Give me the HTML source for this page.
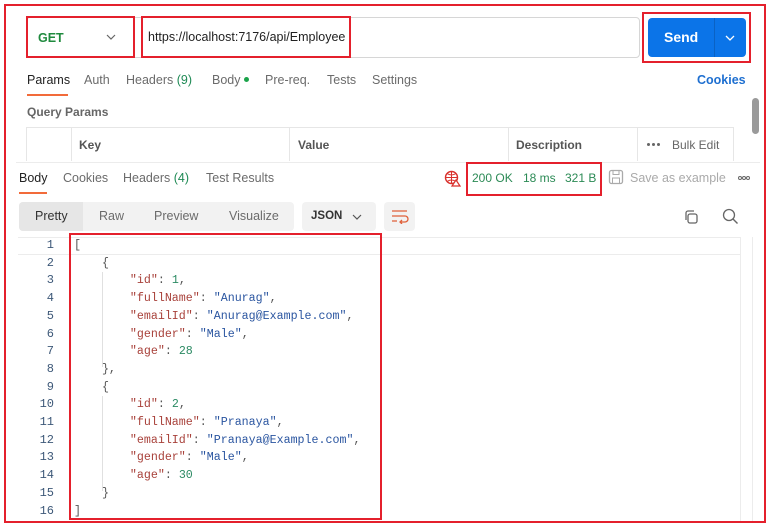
<!DOCTYPE html>
<html><head><meta charset="utf-8"><style>
*{margin:0;padding:0;box-sizing:border-box}
body{width:768px;height:526px;background:#fff;position:relative;overflow:hidden;font-family:"Liberation Sans",sans-serif;font-size:12.5px;color:#6b6b6b}
.a{position:absolute;white-space:nowrap}
.red{position:absolute;border:2px solid #e4202c}
.code{font-family:"Liberation Mono",monospace;font-size:11.65px;line-height:17.7px}
.k{color:#a8413a}.s{color:#2a55a0}.n{color:#2b8a63}.p{color:#555}
.ln{position:absolute;left:20px;width:34px;text-align:right;font-family:"Liberation Mono",monospace;font-size:12px;line-height:17.7px;color:#3d5878}
</style></head><body>
<div class="a" style="left:26px;top:17px;width:614px;height:41px;border:1px solid #d6d6d6;border-radius:4px"></div>
<div class="a" style="left:134px;top:17px;width:1px;height:41px;background:#d6d6d6"></div>
<div class="a" style="left:38px;top:31px;font-weight:bold;color:#1f8a3e;font-size:12.5px">GET</div>
<svg class="a" style="left:106px;top:33px" width="10" height="8"><path d="M1 2 L5 6 L9 2" stroke="#666" fill="none" stroke-width="1.2"/></svg>
<div class="a" style="left:148px;top:30px;color:#222;font-size:12.5px">https://localhost:7176/api/Employee</div>
<div class="a" style="left:648px;top:18px;width:98px;height:39px;background:#0b74e8;border-radius:4px"></div>
<div class="a" style="left:714px;top:18px;width:1px;height:39px;background:#0a62c4"></div>
<div class="a" style="left:664px;top:29px;color:#fff;font-weight:bold;font-size:14px">Send</div>
<svg class="a" style="left:725px;top:34px" width="10" height="8"><path d="M1 2 L5 6 L9 2" stroke="#fff" fill="none" stroke-width="1.3"/></svg>
<div class="a" style="left:27px;top:73px;color:#222">Params</div>
<div class="a" style="left:27px;top:94px;width:41px;height:2px;background:#f26b3a"></div>
<div class="a" style="left:84px;top:73px">Auth</div>
<div class="a" style="left:126px;top:73px">Headers <span style="color:#1f8a55">(9)</span></div>
<div class="a" style="left:212px;top:73px">Body <span style="display:inline-block;width:5px;height:5px;border-radius:50%;background:#1aa34a;vertical-align:2px"></span></div>
<div class="a" style="left:265px;top:73px">Pre-req.</div>
<div class="a" style="left:327px;top:73px">Tests</div>
<div class="a" style="left:372px;top:73px">Settings</div>
<div class="a" style="left:697px;top:73px;color:#1e6fd0;font-weight:bold">Cookies</div>
<div class="a" style="left:27px;top:105px;font-weight:bold;color:#666;font-size:12px">Query Params</div>
<div class="a" style="left:752px;top:98px;width:7px;height:36px;background:#9a9a9a;border-radius:4px"></div>
<div class="a" style="left:26px;top:127px;width:708px;height:34px;border:1px solid #e6e6e6;border-bottom:none"></div>
<div class="a" style="left:71px;top:127px;width:1px;height:34px;background:#e6e6e6"></div>
<div class="a" style="left:289px;top:127px;width:1px;height:34px;background:#e6e6e6"></div>
<div class="a" style="left:508px;top:127px;width:1px;height:34px;background:#e6e6e6"></div>
<div class="a" style="left:637px;top:127px;width:1px;height:34px;background:#e6e6e6"></div>
<div class="a" style="left:79px;top:138px;font-weight:bold;color:#555;font-size:12px">Key</div>
<div class="a" style="left:298px;top:138px;font-weight:bold;color:#555;font-size:12px">Value</div>
<div class="a" style="left:516px;top:138px;font-weight:bold;color:#555;font-size:12px">Description</div>
<div class="a" style="left:647px;top:143px;width:3px;height:3px;background:#666;border-radius:50%;box-shadow:5px 0 #666,10px 0 #666"></div>
<div class="a" style="left:672px;top:138px;color:#666;font-size:12px">Bulk Edit</div>
<div class="a" style="left:16px;top:162px;width:744px;height:1px;background:#ececec"></div>
<div class="a" style="left:19px;top:171px;color:#222">Body</div>
<div class="a" style="left:19px;top:192px;width:28px;height:2px;background:#f26b3a"></div>
<div class="a" style="left:63px;top:171px">Cookies</div>
<div class="a" style="left:123px;top:171px">Headers <span style="color:#1f8a55">(4)</span></div>
<div class="a" style="left:206px;top:171px">Test Results</div>
<svg class="a" style="left:444px;top:170px" width="17" height="17"><circle cx="7.5" cy="7.5" r="6" fill="none" stroke="#d9302c" stroke-width="1.4"/><path d="M1.5 7.5h12M7.5 1.5v12M3 3.5q4.5 3 9 0M3 11.5q4.5-3 9 0" stroke="#d9302c" fill="none" stroke-width="1"/><path d="M12 10l4 6h-8z" fill="#fff" stroke="#d9302c" stroke-width="1.2"/></svg>
<div class="a" style="left:472px;top:171px;color:#2b8a55;font-size:12px">200 OK</div>
<div class="a" style="left:523px;top:171px;color:#2b8a55;font-size:12px">18 ms</div>
<div class="a" style="left:565px;top:171px;color:#2b8a55;font-size:12px">321 B</div>
<svg class="a" style="left:608px;top:169px" width="16" height="16"><rect x="1.5" y="1.5" width="13" height="13" rx="2" fill="none" stroke="#aaa" stroke-width="1.3"/><rect x="5" y="1.5" width="6" height="4" fill="none" stroke="#aaa"/><rect x="4.5" y="9" width="7" height="5.5" fill="none" stroke="#aaa"/></svg>
<div class="a" style="left:630px;top:171px;color:#aaa;font-size:12.5px">Save as example</div>
<div class="a" style="left:738px;top:176px;width:4px;height:4px;border:1px solid #666;border-radius:50%;box-shadow:4px 0 0 -1px #fff"></div>
<div class="a" style="left:742px;top:176px;width:4px;height:4px;border:1px solid #666;border-radius:50%"></div>
<div class="a" style="left:746px;top:176px;width:4px;height:4px;border:1px solid #666;border-radius:50%"></div>
<div class="a" style="left:19px;top:202px;width:275px;height:29px;background:#f2f2f2;border-radius:4px"></div>
<div class="a" style="left:19px;top:202px;width:64px;height:29px;background:#e6e6e6;border-radius:4px 0 0 4px"></div>
<div class="a" style="left:35px;top:209px;color:#333">Pretty</div>
<div class="a" style="left:99px;top:209px">Raw</div>
<div class="a" style="left:154px;top:209px">Preview</div>
<div class="a" style="left:229px;top:209px">Visualize</div>
<div class="a" style="left:302px;top:202px;width:74px;height:29px;background:#f2f2f2;border-radius:4px"></div>
<div class="a" style="left:311px;top:210px;color:#333;font-weight:bold;font-size:11.5px">JSON</div>
<svg class="a" style="left:352px;top:213px" width="10" height="8"><path d="M1 2 L5 6 L9 2" stroke="#555" fill="none" stroke-width="1.2"/></svg>
<div class="a" style="left:384px;top:202px;width:31px;height:29px;background:#f2f2f2;border-radius:4px"></div>
<svg class="a" style="left:391px;top:209px" width="18" height="15"><path d="M1 2h15M1 7h13a3 3 0 0 1 0 6h-5M11 11l-2 2 2 2M1 12h5" stroke="#e0603a" fill="none" stroke-width="1.3"/></svg>
<svg class="a" style="left:683px;top:209px" width="16" height="16"><rect x="5" y="5" width="9" height="9" rx="2" fill="none" stroke="#666" stroke-width="1.3"/><path d="M3 11V4a2 2 0 0 1 2-2h6" stroke="#666" fill="none" stroke-width="1.3"/></svg>
<svg class="a" style="left:722px;top:208px" width="17" height="17"><circle cx="7" cy="7" r="5.5" fill="none" stroke="#666" stroke-width="1.3"/><path d="M11 11l4.5 4.5" stroke="#666" stroke-width="1.4"/></svg>
<div class="a" style="left:18px;top:237px;width:723px;height:18px;border:1px solid #ececec;border-left:none"></div>
<div class="a" style="left:740px;top:237px;width:13px;height:285px;border-left:1px solid #ececec;border-right:1px solid #ececec"></div>
<div class="a" style="left:102px;top:272px;width:1px;height:95px;background:#e0e0e0"></div>
<div class="a" style="left:102px;top:396px;width:1px;height:95px;background:#e0e0e0"></div>
<div style="position:absolute;top:237px;left:0">
<div class="ln" style="top:0">1<br>2<br>3<br>4<br>5<br>6<br>7<br>8<br>9<br>10<br>11<br>12<br>13<br>14<br>15<br>16</div>
<div class="a code p" style="left:74px;top:0">[<br>&nbsp;&nbsp;&nbsp;&nbsp;{<br>&nbsp;&nbsp;&nbsp;&nbsp;&nbsp;&nbsp;&nbsp;&nbsp;<span class="k">"id"</span>: <span class="n">1</span>,<br>&nbsp;&nbsp;&nbsp;&nbsp;&nbsp;&nbsp;&nbsp;&nbsp;<span class="k">"fullName"</span>: <span class="s">"Anurag"</span>,<br>&nbsp;&nbsp;&nbsp;&nbsp;&nbsp;&nbsp;&nbsp;&nbsp;<span class="k">"emailId"</span>: <span class="s">"Anurag@Example.com"</span>,<br>&nbsp;&nbsp;&nbsp;&nbsp;&nbsp;&nbsp;&nbsp;&nbsp;<span class="k">"gender"</span>: <span class="s">"Male"</span>,<br>&nbsp;&nbsp;&nbsp;&nbsp;&nbsp;&nbsp;&nbsp;&nbsp;<span class="k">"age"</span>: <span class="n">28</span><br>&nbsp;&nbsp;&nbsp;&nbsp;},<br>&nbsp;&nbsp;&nbsp;&nbsp;{<br>&nbsp;&nbsp;&nbsp;&nbsp;&nbsp;&nbsp;&nbsp;&nbsp;<span class="k">"id"</span>: <span class="n">2</span>,<br>&nbsp;&nbsp;&nbsp;&nbsp;&nbsp;&nbsp;&nbsp;&nbsp;<span class="k">"fullName"</span>: <span class="s">"Pranaya"</span>,<br>&nbsp;&nbsp;&nbsp;&nbsp;&nbsp;&nbsp;&nbsp;&nbsp;<span class="k">"emailId"</span>: <span class="s">"Pranaya@Example.com"</span>,<br>&nbsp;&nbsp;&nbsp;&nbsp;&nbsp;&nbsp;&nbsp;&nbsp;<span class="k">"gender"</span>: <span class="s">"Male"</span>,<br>&nbsp;&nbsp;&nbsp;&nbsp;&nbsp;&nbsp;&nbsp;&nbsp;<span class="k">"age"</span>: <span class="n">30</span><br>&nbsp;&nbsp;&nbsp;&nbsp;}<br>]</div>
</div>
<div class="red" style="left:4px;top:4px;width:762px;height:519px"></div>
<div class="red" style="left:26px;top:16px;width:109px;height:42px"></div>
<div class="red" style="left:141px;top:16px;width:210px;height:42px"></div>
<div class="red" style="left:642px;top:12px;width:109px;height:51px"></div>
<div class="red" style="left:466px;top:162px;width:136px;height:34px"></div>
<div class="red" style="left:69px;top:233px;width:313px;height:287px"></div>
</body></html>
